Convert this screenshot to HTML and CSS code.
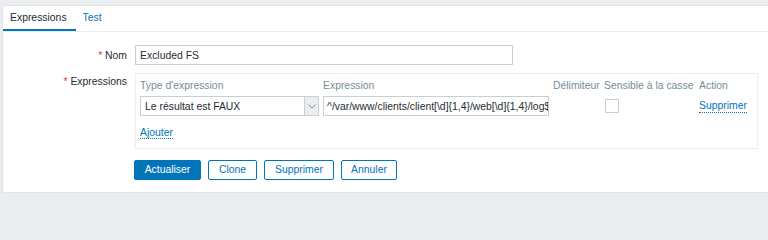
FILE: index.html
```html
<!DOCTYPE html>
<html lang="fr">
<head>
<meta charset="utf-8">
<title>Expressions</title>
<link rel="stylesheet" href="styles.css">
</head>
<body>
<div class="card">
  <div class="tabs">
    <a class="tab tab-active">Expressions</a>
    <a class="tab">Test</a>
  </div>
  <div class="form">
    <div class="row">
      <div class="lbl"><span class="req">*</span> Nom</div>
      <div class="field"><div class="input input-name">Excluded FS</div></div>
    </div>
    <div class="row row-expr">
      <div class="lbl lbl-expr"><span class="req">*</span> Expressions</div>
      <div class="field">
        <div class="exprbox">
          <div class="grid">
            <div class="th">Type d'expression</div>
            <div class="th">Expression</div>
            <div class="th">Délimiteur</div>
            <div class="th">Sensible à la casse</div>
            <div class="th">Action</div>
            <div class="select">
              <span class="select-text">Le résultat est FAUX</span>
              <span class="select-btn"><svg width="8" height="5" viewBox="0 0 8 5"><path d="M0.5 0.5 L4 4 L7.5 0.5" fill="none" stroke="#768d99" stroke-width="1"/></svg></span>
            </div>
            <div class="input input-expr"><span>^/var/www/clients/client[\d]{1,4}/web[\d]{1,4}/log$</span></div>
            <div class="cell"></div>
            <div class="cell"><span class="checkbox"></span></div>
            <div class="cell"><a class="link">Supprimer</a></div>
          </div>
          <div class="add"><a class="link">Ajouter</a></div>
        </div>
      </div>
    </div>
    <div class="buttons">
      <button class="btn btn-main">Actualiser</button>
      <button class="btn">Clone</button>
      <button class="btn">Supprimer</button>
      <button class="btn">Annuler</button>
    </div>
  </div>
</div>
</body>
</html>
```
FILE: styles.css
```css
html, body {
  margin: 0;
  padding: 0;
  background: #ebeef0;
  font-family: "Liberation Sans", Arial, sans-serif;
  font-size: 10.4px;
  color: #1f2c33;
}
.card {
  margin: 5px 0 0 2px;
  width: 790px;
  background: #fff;
  border: 1px solid #dfe4e7;
  border-right: none;
  height: 188px;
  box-sizing: border-box;
}
.tabs {
  display: flex;
  height: 25px;
  border-bottom: 1px solid #ebeef0;
}
.tab {
  display: flex;
  align-items: center;
  padding: 0 8px 0 7px;
  color: #0275b8;
  box-sizing: border-box;
  height: 25px;
  border-bottom: 2px solid transparent;
}
.tab-active {
  color: #1f2c33;
  border-bottom-color: #0275b8;
  padding-right: 9px;
}
.form {
  padding: 13px 0 0 0;
  display: flex;
  flex-direction: column;
}
.row {
  display: flex;
  align-items: center;
  margin-bottom: 8px;
}
.row-expr {
  align-items: flex-start;
  margin-bottom: 11px;
}
.lbl {
  text-align: right;
  padding-right: 8px;
  box-sizing: border-box;
  flex: none;
  width: 132px;
}
.lbl-expr {
  padding-top: 3px;
}
.req {
  color: #e33734;
}
.input {
  box-sizing: border-box;
  height: 20px;
  border: 1px solid #c9d0d4;
  display: flex;
  align-items: center;
  padding: 0 4px;
  white-space: nowrap;
  overflow: hidden;
  background: #fff;
}
.input-name {
  width: 378px;
}
.exprbox {
  width: 623px;
  box-sizing: border-box;
  border: 1px solid #ebeef0;
  padding: 4px 4px 7px 4px;
}
.grid {
  display: grid;
  grid-template-columns: 179px 226px 46px 91px auto;
  column-gap: 4px;
  row-gap: 2px;
  align-items: center;
}
.th {
  color: #768d99;
  line-height: 16px;
  white-space: nowrap;
}
.grid .th:nth-child(4), .grid .th:nth-child(5) {
  margin-left: 1px;
}
.select {
  box-sizing: border-box;
  height: 20px;
  border: 1px solid #c9d0d4;
  display: flex;
  align-items: stretch;
}
.select-text {
  flex: 1;
  display: flex;
  align-items: center;
  padding-left: 4px;
}
.select-btn {
  width: 13px;
  background: #ebeef0;
  border-left: 1px solid #c9d0d4;
  display: flex;
  align-items: center;
  justify-content: center;
}
.input-expr {
  width: 226px;
  padding-left: 3px;
}
.cell {
  display: flex;
  align-items: center;
  height: 20px;
}
.checkbox {
  display: block;
  width: 14px;
  height: 14px;
  box-sizing: border-box;
  border: 1px solid #c9d0d4;
  margin-left: 2px;
  background: #fff;
}
.link {
  color: #0275b8;
  border-bottom: 1px dotted #0275b8;
  line-height: 13px;
  margin-left: 1px;
}
.add {
  margin-top: 9px;
  line-height: 15px;
  height: 16px;
}
.add .link {
  margin-left: 0;
}
.buttons {
  display: flex;
  gap: 7px;
  padding-left: 131px;
}
.btn {
  font-family: "Liberation Sans", Arial, sans-serif;
  font-size: 10.4px;
  height: 20px;
  box-sizing: border-box;
  border: 1px solid #0275b8;
  background: #fff;
  color: #0275b8;
  padding: 0;
  margin: 0;
  border-radius: 2px;
  line-height: 18px;
}
.btn-main {
  background: #0275b8;
  color: #fff;
  width: 67px;
}
.btn:nth-child(2) { width: 49px; }
.btn:nth-child(3) { width: 70px; }
.btn:nth-child(4) { width: 56px; }
```
